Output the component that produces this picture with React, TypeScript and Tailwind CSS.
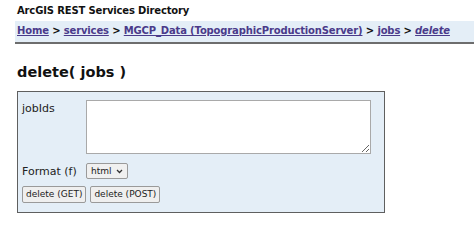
export default function App() {
  return (
    <div className="min-h-[236px] bg-white font-['DejaVu_Sans',sans-serif] text-[#111]">
      <div className="pl-[17px] pt-[4px] text-[10px] font-bold leading-[14px] tracking-[-0.15px]">ArcGIS REST Services Directory</div>
      <div className="ml-[15px] mt-[3px] h-[23px] whitespace-nowrap border-b-2 border-[#6d6d6d] bg-[#e4eef7] pl-[2px] pt-[3px] text-[10px] font-bold leading-[14px] tracking-[-0.15px]">
        <a className="text-[#4a3a8a] underline">Home</a> &gt;{' '}
        <a className="text-[#4a3a8a] underline">services</a> &gt;{' '}
        <a className="text-[#4a3a8a] underline">MGCP_Data (TopographicProductionServer)</a> &gt;{' '}
        <a className="text-[#4a3a8a] underline">jobs</a> &gt;{' '}
        <a className="italic text-[#4a3a8a] underline">delete</a>
      </div>
      <h2 className="ml-[17px] mt-[18px] text-[14.5px] font-bold leading-[20px]">delete( jobs )</h2>
      <div className="ml-[17px] mt-[9px] w-[368px] border border-[#5f5f5f] bg-[#e4eef7] pb-[9px] pl-[4px] pt-[8px] text-[11px] text-[#222]">
        <div className="flex">
          <div className="w-[64px] pt-[2px] leading-[13px]">jobIds</div>
          <textarea className="h-[54px] w-[285px] resize-y border border-[#a9a9a9] bg-white"></textarea>
        </div>
        <div className="mt-[9px] flex items-center">
          <div className="w-[64px] leading-[13px]">Format (f)</div>
          <div className="relative">
            <select className="h-[16px] w-[42px] appearance-none rounded-[2px] border border-[#9a9a9a] bg-[#f0f0f0] pl-[4px] text-[9px] leading-[12px]">
              <option>html</option>
            </select>
            <svg className="pointer-events-none absolute right-[5px] top-[6px]" width="7" height="5" viewBox="0 0 7 5">
              <path d="M1 1 L3.5 3.5 L6 1" fill="none" stroke="#333" strokeWidth="1.3" />
            </svg>
          </div>
        </div>
        <div className="mt-[6px] flex gap-[4px]">
          <button className="h-[17px] rounded-[2px] border border-[#9a9a9a] bg-[#efefef] px-[3px] text-[9px] leading-[13px]">delete (GET)</button>
          <button className="h-[17px] rounded-[2px] border border-[#9a9a9a] bg-[#efefef] px-[3px] text-[9px] leading-[13px]">delete (POST)</button>
        </div>
      </div>
    </div>
  )
}
